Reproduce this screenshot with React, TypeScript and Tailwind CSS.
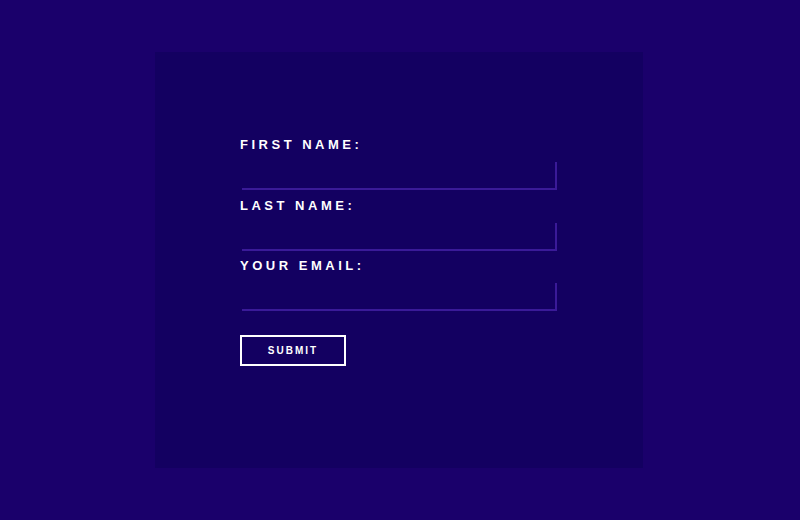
import React from 'react';

const fields = [
  { id: 'first', label: 'FIRST NAME:', type: 'text' },
  { id: 'last', label: 'LAST NAME:', type: 'text' },
  { id: 'email', label: 'YOUR EMAIL:', type: 'email' },
];

export default function App() {
  return (
    <div
      className="flex h-[520px] w-full items-center justify-center bg-[#1a006b] pr-[2px]"
      style={{ fontFamily: '"Liberation Sans", Arial, sans-serif' }}
    >
      <div className="h-[416px] w-[488px] bg-[#130061] px-[85px] pt-[85px]">
        <form className="flex flex-col" onSubmit={(e) => e.preventDefault()}>
          <div className="flex flex-col gap-[7.5px]">
            {fields.map((f) => (
              <div key={f.id} className="flex flex-col">
                <label
                  htmlFor={f.id}
                  className="block text-[13px] font-bold leading-[16px] tracking-[0.27em] text-white"
                >
                  {f.label}
                </label>
                <input
                  id={f.id}
                  type={f.type}
                  className="ml-[2px] mt-[9px] h-[28px] w-[315px] border-0 border-b-2 border-r-2 border-[#3a1a98] bg-transparent px-2 text-sm text-white outline-none"
                />
              </div>
            ))}
          </div>
          <button
            type="submit"
            className="mt-[24px] h-[31px] w-[106px] border-2 border-white text-[10px] font-bold tracking-[0.2em] text-white"
          >
            SUBMIT
          </button>
        </form>
      </div>
    </div>
  );
}
